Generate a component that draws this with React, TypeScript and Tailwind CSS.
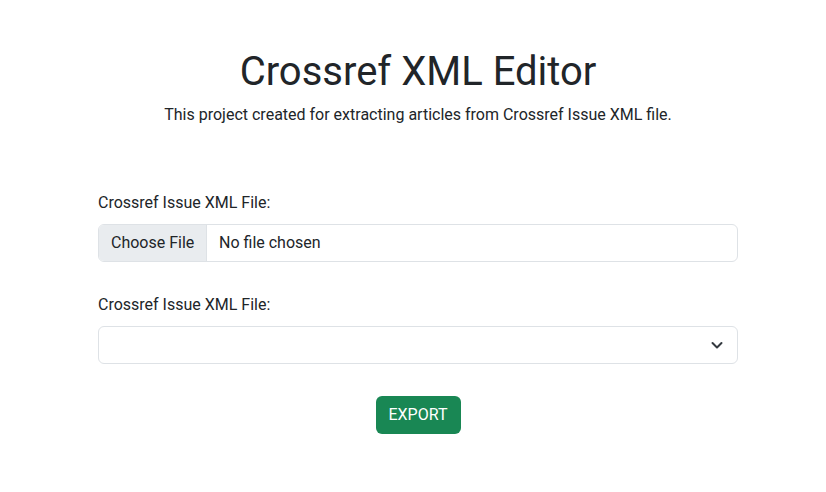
import React from "react";

const App: React.FC = () => {
  return (
    <div className="min-h-screen bg-white text-[#212529] font-['Roboto',sans-serif] pl-[10px]">
      <div className="w-[640px] mx-auto pt-[48px]">
        <div className="text-center">
          <h1 className="text-[40px] leading-[48px] font-normal mb-[7px]">Crossref XML Editor</h1>
          <p className="text-base leading-6">This project created for extracting articles from Crossref Issue XML file.</p>
        </div>

        <form className="mt-[64px]">
          <div className="mb-[31px]">
            <label className="block text-base leading-6 mb-[9px]">Crossref Issue XML File:</label>
            <div className="flex h-[38px] border border-[#dee2e6] rounded-[6px] overflow-hidden">
              <span className="flex items-center shrink-0 whitespace-nowrap px-3 bg-[#e9ecef] border-r border-[#dee2e6] w-[108px]">Choose File</span>
              <span className="flex items-center whitespace-nowrap px-3">No file chosen</span>
            </div>
          </div>

          <div>
            <label className="block text-base leading-6 mb-[9px]">Crossref Issue XML File:</label>
            <div className="flex items-center justify-end h-[38px] border border-[#dee2e6] rounded-[6px] pr-3">
              <svg width="16" height="12" viewBox="0 0 16 12" fill="none">
                <path d="m3.5 4 4.5 4.5 4.5-4.5" stroke="#343a40" strokeWidth="2" strokeLinecap="round" strokeLinejoin="round" />
              </svg>
            </div>
          </div>

          <div className="flex justify-center mt-[32px]">
            <button type="button" className="h-[38px] w-[85px] rounded-[6px] bg-[#198754] text-white text-base">EXPORT</button>
          </div>
        </form>
      </div>
    </div>
  );
};

export default App;
